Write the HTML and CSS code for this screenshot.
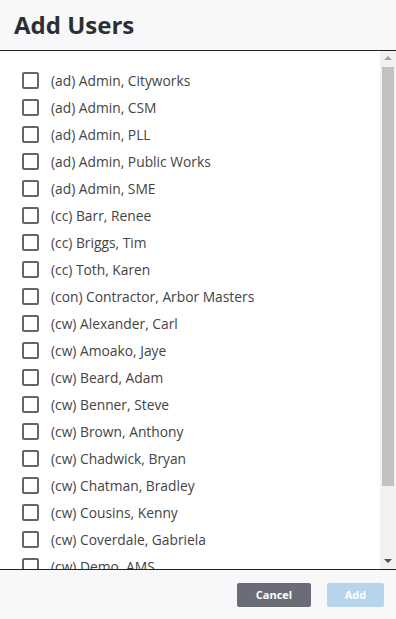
FILE: index.html
```
<!DOCTYPE html>
<html lang="en">
<head>
    <meta charset="UTF-8">
    <meta name="viewport" content="width=device-width, initial-scale=1.0">
    <title>Add Users</title>
    <link rel="stylesheet" href="styles.css">
</head>
<body>
    <div class="dialog">
        <div class="dialog-header">
            <h1>Add Users</h1>
        </div>
        <div class="dialog-body">
            <ul class="user-list">
                <li><span class="box"></span>(ad) Admin, Cityworks</li>
                <li><span class="box"></span>(ad) Admin, CSM</li>
                <li><span class="box"></span>(ad) Admin, PLL</li>
                <li><span class="box"></span>(ad) Admin, Public Works</li>
                <li><span class="box"></span>(ad) Admin, SME</li>
                <li><span class="box"></span>(cc) Barr, Renee</li>
                <li><span class="box"></span>(cc) Briggs, Tim</li>
                <li><span class="box"></span>(cc) Toth, Karen</li>
                <li><span class="box"></span>(con) Contractor, Arbor Masters</li>
                <li><span class="box"></span>(cw) Alexander, Carl</li>
                <li><span class="box"></span>(cw) Amoako, Jaye</li>
                <li><span class="box"></span>(cw) Beard, Adam</li>
                <li><span class="box"></span>(cw) Benner, Steve</li>
                <li><span class="box"></span>(cw) Brown, Anthony</li>
                <li><span class="box"></span>(cw) Chadwick, Bryan</li>
                <li><span class="box"></span>(cw) Chatman, Bradley</li>
                <li><span class="box"></span>(cw) Cousins, Kenny</li>
                <li><span class="box"></span>(cw) Coverdale, Gabriela</li>
                <li><span class="box"></span>(cw) Demo, AMS</li>
            </ul>
            <div class="scrollbar">
                <span class="arrow up"></span>
                <div class="track"><div class="thumb"></div></div>
                <span class="arrow down"></span>
            </div>
        </div>
        <div class="dialog-footer">
            <button type="button" class="btn cancel">Cancel</button>
            <button type="button" class="btn add" disabled>Add</button>
        </div>
    </div>
</body>
</html>
```
FILE: styles.css
```
*{
    margin: 0;
    padding: 0;
    box-sizing: border-box;
}
body{
    width: 396px;
    height: 619px;
    overflow: hidden;
    font-family: "Open Sans", "Liberation Sans", sans-serif;
    background-color: #fff;
}
.dialog{
    display: flex;
    flex-direction: column;
    height: 619px;
}
.dialog-header{
    height: 51px;
    background-color: #f8f8fa;
    border-bottom: 1px solid #222;
    padding: 10px 14px 0;
}
.dialog-header h1{
    font-size: 24px;
    font-weight: 700;
    color: #2b2f33;
    line-height: 30px;
}
.dialog-body{
    height: 518px;
    display: flex;
    overflow: hidden;
}
.user-list{
    flex: 1;
    list-style: none;
    padding: 16px 0 0 22px;
    overflow: hidden;
}
.user-list li{
    display: flex;
    align-items: center;
    height: 27px;
    font-size: 13.8px;
    color: #444;
}
.box{
    width: 17px;
    height: 17px;
    border: 2px solid #666;
    border-radius: 2px;
    margin-right: 12px;
    flex-shrink: 0;
}
.scrollbar{
    width: 16px;
    background-color: #f1f1f1;
    display: flex;
    flex-direction: column;
    align-items: center;
}
.arrow{
    width: 0;
    height: 0;
    border-left: 4px solid transparent;
    border-right: 4px solid transparent;
}
.arrow.up{
    margin: 5px 0 7px;
    border-bottom: 4px solid #a3a3a3;
}
.arrow.down{
    margin: 5px 0 6px;
    border-top: 4px solid #505050;
}
.track{
    flex: 1;
    width: 100%;
    padding: 0 2px;
}
.thumb{
    height: 419px;
    background-color: #c1c1c1;
}
.dialog-footer{
    flex: 1;
    background-color: #f8f8fa;
    border-top: 1px solid #222;
    display: flex;
    justify-content: flex-end;
    align-items: flex-start;
    gap: 16px;
    padding: 13px 12px 0 0;
}
.btn{
    height: 24px;
    padding: 0;
    border: none;
    border-radius: 2px;
    color: #fff;
    font-family: "Open Sans", "Liberation Sans", sans-serif;
    font-size: 11px;
    font-weight: 700;
    line-height: 24px;
}
.cancel{
    width: 74px;
    background-color: #6a6d78;
}
.add{
    width: 57px;
    background-color: #b8d4ea;
}
```
